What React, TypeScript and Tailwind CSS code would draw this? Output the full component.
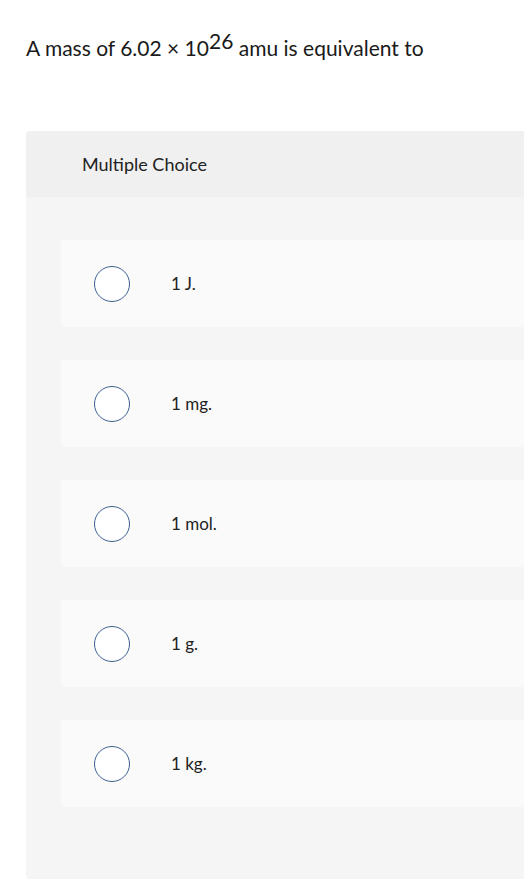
import React from "react";

const options = ["1 J.", "1 mg.", "1 mol.", "1 g.", "1 kg."];

export default function App() {
  return (
    <div className="w-[524px] h-[884px] overflow-hidden bg-white text-[#1a1a1a]" style={{ fontFamily: "Lato, 'Open Sans', sans-serif" }}>
      <div className="pt-[30px] pl-[26px] text-[21px] leading-[28px]">
        A mass of 6.02 × 10<span className="align-[7px] text-[21px] leading-none">26</span> amu is equivalent to
      </div>
      <div className="mt-[69px] ml-[26px] w-[560px] rounded-[4px] bg-[#f5f5f5] pb-[72px]">
        <div className="h-[66px] rounded-t-[4px] bg-[#f0f0f0] pl-[56px] flex items-center text-[18px] text-[#222]">
          Multiple Choice
        </div>
        <div className="pt-[43px] pl-[35px] flex flex-col gap-[33px]">
          {options.map((o) => (
            <div key={o} className="h-[87px] rounded-[4px] bg-[#fafafa] flex items-center">
              <div className="ml-[33px] w-[36px] h-[36px] rounded-full border-[1.5px] border-[#3b5f93] bg-white" />
              <div className="ml-[41px] text-[17px] leading-[24px] text-[#222]">{o}</div>
            </div>
          ))}
        </div>
      </div>
    </div>
  );
}
